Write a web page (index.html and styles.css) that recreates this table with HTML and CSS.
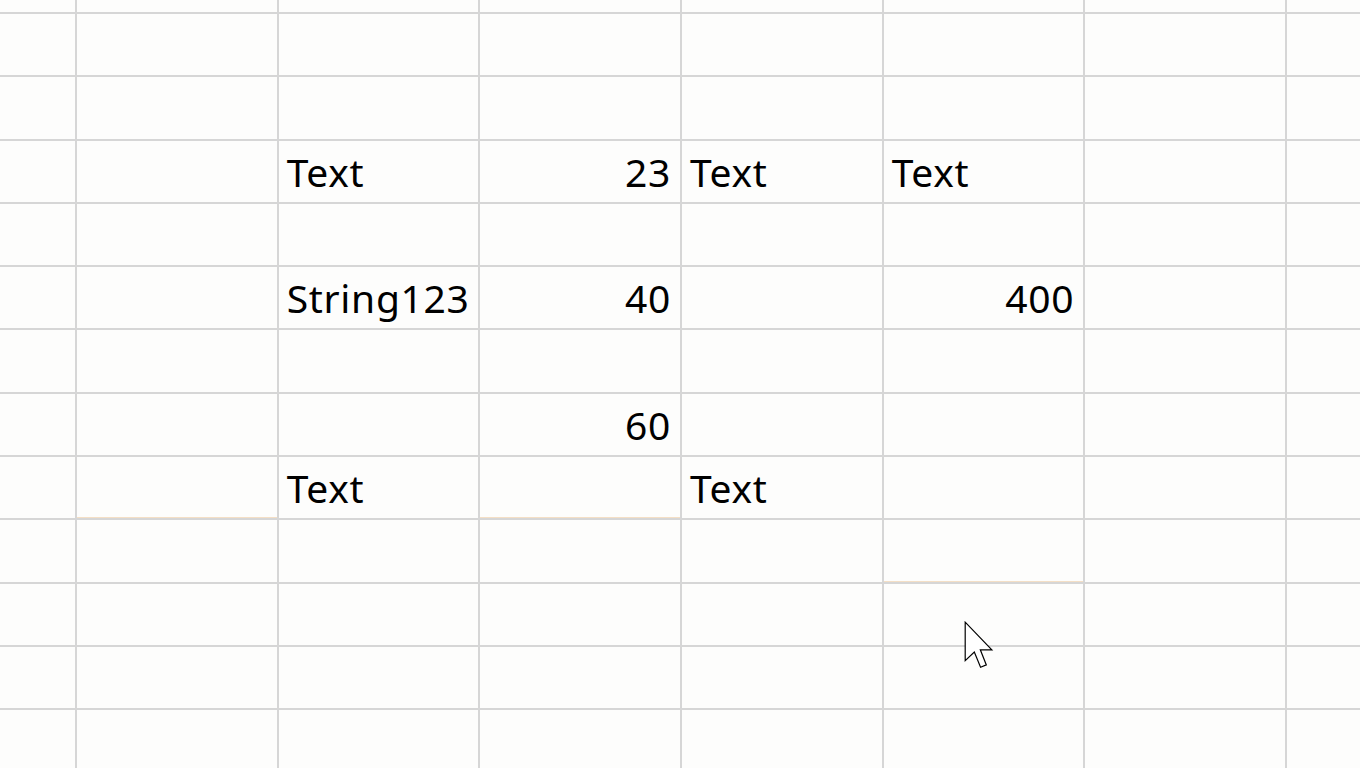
FILE: index.html
```html
<!DOCTYPE html>
<html>
<head>
<meta charset="utf-8">
<link rel="stylesheet" href="styles.css">
</head>
<body>
<div class="sheet">
  <!-- row 0 -->
  <div class="c"></div><div class="c"></div><div class="c"></div><div class="c"></div><div class="c"></div><div class="c"></div><div class="c"></div><div class="c"></div>
  <!-- row 1 -->
  <div class="c"></div><div class="c"></div><div class="c"></div><div class="c"></div><div class="c"></div><div class="c"></div><div class="c"></div><div class="c"></div>
  <!-- row 2 -->
  <div class="c"></div><div class="c"></div><div class="c"></div><div class="c"></div><div class="c"></div><div class="c"></div><div class="c"></div><div class="c"></div>
  <!-- row 3 -->
  <div class="c"></div><div class="c"></div><div class="c txt">Text</div><div class="c num">23</div><div class="c txt">Text</div><div class="c txt">Text</div><div class="c"></div><div class="c"></div>
  <!-- row 4 -->
  <div class="c"></div><div class="c"></div><div class="c"></div><div class="c"></div><div class="c"></div><div class="c"></div><div class="c"></div><div class="c"></div>
  <!-- row 5 -->
  <div class="c"></div><div class="c"></div><div class="c txt">String123</div><div class="c num">40</div><div class="c"></div><div class="c num">400</div><div class="c"></div><div class="c"></div>
  <!-- row 6 -->
  <div class="c"></div><div class="c"></div><div class="c"></div><div class="c"></div><div class="c"></div><div class="c"></div><div class="c"></div><div class="c"></div>
  <!-- row 7 -->
  <div class="c"></div><div class="c"></div><div class="c"></div><div class="c num">60</div><div class="c"></div><div class="c"></div><div class="c"></div><div class="c"></div>
  <!-- row 8 -->
  <div class="c"></div><div class="c ants"></div><div class="c txt">Text</div><div class="c ants"></div><div class="c txt">Text</div><div class="c"></div><div class="c"></div><div class="c"></div>
  <!-- row 9 -->
  <div class="c"></div><div class="c"></div><div class="c"></div><div class="c"></div><div class="c"></div><div class="c ants"></div><div class="c"></div><div class="c"></div>
  <!-- row 10 -->
  <div class="c"></div><div class="c"></div><div class="c"></div><div class="c"></div><div class="c"></div><div class="c cursor-cell"><svg class="cursor" width="30" height="48" viewBox="0 0 12.5 20"><path d="M0.5 0.5 L0.5 16.5 L4.3 12.9 L6.9 19.3 L9.3 18.3 L6.8 12 L11.6 12 Z" fill="#fff" stroke="#000" stroke-width="0.5" stroke-linejoin="miter"/></svg></div><div class="c"></div><div class="c"></div>
  <!-- row 11 -->
  <div class="c"></div><div class="c"></div><div class="c"></div><div class="c"></div><div class="c"></div><div class="c"></div><div class="c"></div><div class="c"></div>
  <!-- row 12 -->
  <div class="c"></div><div class="c"></div><div class="c"></div><div class="c"></div><div class="c"></div><div class="c"></div><div class="c"></div><div class="c"></div>
</div>
</body>
</html>
```
FILE: styles.css
```css
html, body {
  margin: 0;
  padding: 0;
  background: #fdfdfc;
}
body {
  width: 1360px;
  height: 768px;
  overflow: hidden;
}
.sheet {
  display: grid;
  grid-template-columns: 75px repeat(6, 199.67px) 1fr;
  grid-template-rows: 12px repeat(11, 61.3px) 1fr;
  gap: 2px;
  background: #d6d6d6;
  width: 1360px;
  height: 768px;
  font-family: "Noto Sans", "Open Sans", sans-serif;
  font-size: 39px;
  letter-spacing: 0.7px;
  color: #000;
}
.c {
  background: #fdfdfc;
  display: flex;
  align-items: flex-end;
  line-height: 38px;
  padding: 0 9px 11px 8px;
  min-width: 0;
  white-space: nowrap;
  box-sizing: border-box;
}
.num {
  justify-content: flex-end;
}
.ants {
  box-shadow: inset 0 -1px 0 #f4dfc6;
}
.cursor-cell {
  position: relative;
}
.cursor {
  position: absolute;
  left: 80px;
  top: 37px;
}
```
